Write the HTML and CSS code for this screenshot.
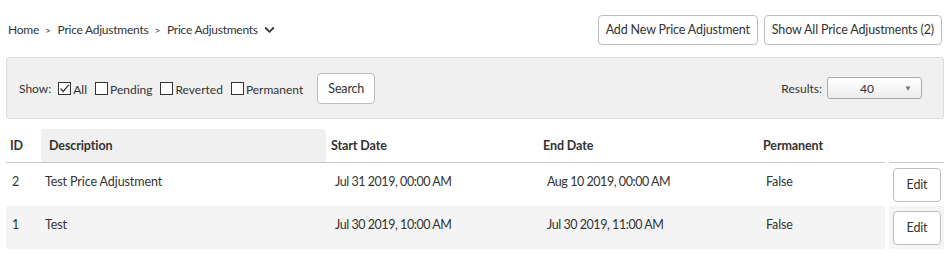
FILE: index.html
```html
<!DOCTYPE html>
<html>
<head>
<meta charset="utf-8">
<link rel="stylesheet" href="styles.css">
</head>
<body>
<div class="page">
  <div class="topbar">
    <nav class="crumbs">
      <span>Home</span><span class="sep">&gt;</span><span>Price Adjustments</span><span class="sep">&gt;</span><span>Price Adjustments</span>
      <svg class="chev" width="11" height="8" viewBox="0 0 11 8"><path d="M1.2 1.5 L5.5 5.8 L9.8 1.5" fill="none" stroke="#333" stroke-width="1.8"/></svg>
    </nav>
    <div class="actions">
      <button class="btn">Add New Price Adjustment</button>
      <button class="btn">Show All Price Adjustments (2)</button>
    </div>
  </div>

  <div class="filter">
    <div class="show">
      <span class="lbl">Show:</span>
      <label class="chk"><span class="box checked"><svg width="11" height="11" viewBox="0 0 11 11"><path d="M1.5 5.5 L4.2 8.5 L9.8 1.8" fill="none" stroke="#333" stroke-width="1.2"/></svg></span>All</label>
      <label class="chk"><span class="box"></span>Pending</label>
      <label class="chk"><span class="box"></span>Reverted</label>
      <label class="chk"><span class="box"></span>Permanent</label>
      <button class="btn search">Search</button>
    </div>
    <div class="results">
      <span class="lbl">Results:</span>
      <div class="select"><span class="val">40</span><span class="arrow">&#9660;</span></div>
    </div>
  </div>

  <div class="table">
    <div class="row head">
      <div class="cells">
        <div class="c id">ID</div>
        <div class="c desc sorted">Description</div>
        <div class="c start">Start Date</div>
        <div class="c end">End Date</div>
        <div class="c perm">Permanent</div>
      </div>
      <div class="act"></div>
    </div>
    <div class="row">
      <div class="cells">
        <div class="c id">2</div>
        <div class="c desc">Test Price Adjustment</div>
        <div class="c start date">Jul 31 2019, 00:00 AM</div>
        <div class="c end date">Aug 10 2019, 00:00 AM</div>
        <div class="c perm">False</div>
      </div>
      <div class="act"><button class="btn edit">Edit</button></div>
    </div>
    <div class="row alt">
      <div class="cells">
        <div class="c id">1</div>
        <div class="c desc">Test</div>
        <div class="c start date">Jul 30 2019, 10:00 AM</div>
        <div class="c end date">Jul 30 2019, 11:00 AM</div>
        <div class="c perm">False</div>
      </div>
      <div class="act"><button class="btn edit">Edit</button></div>
    </div>
  </div>
</div>
</body>
</html>
```

FILE: styles.css
```css
* { box-sizing: border-box; }
html, body { margin: 0; padding: 0; background: #fff; }
body {
  font-family: Lato, "Liberation Sans", sans-serif;
  font-size: 12px;
  color: #333;
}
.page { padding: 0 7px 0 6px; width: 951px; }

.topbar {
  display: flex;
  justify-content: space-between;
  align-items: center;
  height: 57px;
  padding-top: 2px;
}
.crumbs {
  display: flex;
  align-items: center;
  padding-left: 2px;
  font-size: 12px;
  letter-spacing: -0.25px;
}
.crumbs .sep { margin: 0 7px 0 6px; font-size: 10px; }
.chev { margin-left: 6px; }

.actions { display: flex; gap: 6px; padding-right: 2px; }
.btn {
  font-family: inherit;
  font-size: 12.5px;
  letter-spacing: -0.15px;
  white-space: nowrap;
  color: #333;
  background: #fff;
  border: 1px solid #bdbdbd;
  border-radius: 4px;
  height: 30px;
  padding: 0 7px;
  cursor: pointer;
}

.filter {
  display: flex;
  justify-content: space-between;
  align-items: center;
  height: 62px;
  background: #f0f0f0;
  border: 1px solid #dcdcdc;
  border-radius: 3px;
  padding: 0 21px 0 12px;
}
.show { display: flex; align-items: center; }
.lbl { margin-right: 7px; }
.chk { display: flex; align-items: center; margin-right: 8px; padding-top: 3px; }
.box {
  width: 13px; height: 13px;
  border: 1px solid #333;
  background: #fff;
  margin-right: 2px;
  margin-top: -3px;
  display: inline-flex;
  align-items: center;
  justify-content: center;
}
.search { height: 31px; width: 58px; margin-left: 6px; padding: 0; font-size: 12.5px; }
.results { display: flex; align-items: center; }
.results .lbl { margin-right: 5px; }
.select {
  width: 95px; height: 22px;
  border: 1px solid #aaa;
  border-radius: 3px;
  background: linear-gradient(#ffffff, #ececec);
  display: flex; align-items: center;
  font-size: 12px;
}
.select .val { flex: 1; text-align: center; padding-left: 2px; }
.select .arrow { font-size: 8px; color: #777; margin-right: 9px; }

.table { margin-top: 10px; font-size: 12.5px; letter-spacing: -0.1px; }
.row { display: flex; gap: 4px; }
.cells {
  flex: 1;
  display: grid;
  grid-template-columns: 35px 285px 213px 220px 1fr;
  align-items: center;
}
.act { width: 55px; display: flex; align-items: center; justify-content: flex-start; }
.head .cells, .head .act { height: 34px; border-bottom: 1px solid #c8c8c8; font-weight: bold; }
.head .c { height: 100%; display: flex; align-items: center; padding-left: 8px; }
.head .c.id { padding-left: 4px; }
.head .c.start { padding-left: 5px; }
.head .c.end { padding-left: 4px; }
.head .c.perm { padding-left: 4px; }
.head .sorted { background: #f0f0f0; border-radius: 4px 4px 0 0; }
.row:not(.head) .cells, .row:not(.head) .act { height: 43px; }
.row:not(.head) .c { padding-bottom: 6px; }
.row:not(.head) .c.id { padding-left: 6px; }
.row:not(.head) .c.desc { padding-left: 4px; }
.row:not(.head) .c.start { padding-left: 9px; }
.row:not(.head) .c.end { padding-left: 8px; }
.row:not(.head) .c.perm { padding-left: 7px; }
.date { letter-spacing: -0.45px; }
.alt .cells, .alt .act { background: #f4f4f4; }
.edit { width: 48px; height: 34px; margin-left: 4px; padding: 0; }
```
